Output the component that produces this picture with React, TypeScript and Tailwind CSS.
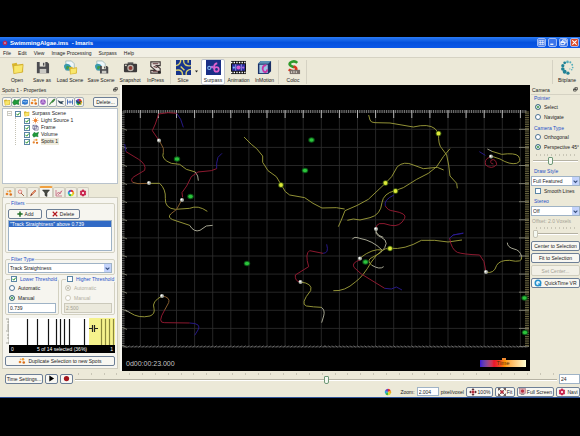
import React, { ReactNode } from "react";

/* ---------- icons ---------- */

const Svg = ({ c, children, vb = "0 0 16 16" }: { c: string; children: ReactNode; vb?: string }) => (
  <svg viewBox={vb} className={"shrink-0 " + c} aria-hidden="true">
    {children}
  </svg>
);

const Folder = () => (
  <>
    <path d="M2 4l5-1 1 2 6-1v9l-10 1.500z" fill="#d9b52c" />
    <path d="M4 6l10-1-1 8-9 1.500z" fill="#f9e76a" stroke="#c9a227" strokeWidth=".6" />
  </>
);
const Floppy = () => (
  <>
    <path d="M2 2h11l2 2v10H2z" fill="#4c4c50" />
    <rect x="5" y="2" width="6" height="5" fill="#e9e7dc" />
    <rect x="8.500" y="3" width="1.500" height="3" fill="#4c4c50" />
    <rect x="5" y="9.500" width="7" height="4.500" fill="#c9c8c2" />
  </>
);
const Page = () => (
  <>
    <path d="M3 1h6l3 3v7H3z" fill="#eef6fb" stroke="#8aa" strokeWidth=".7" />
    <path d="M1 6c2-3 5-2 7 0s2 4-1 5-6-1-6-5z" fill="#3a9ab0" />
    <path d="M4 6l3 1-2 3-2-1z" fill="#3f9e48" />
  </>
);
const Camera = () => (
  <>
    <rect x="1" y="4" width="14" height="9" rx="1" fill="#3c3a3a" />
    <rect x="5" y="2.500" width="6" height="2" fill="#555" />
    <circle cx="8" cy="8.500" r="3.400" fill="#bdb6ae" />
    <circle cx="8" cy="8.500" r="2.100" fill="#8c3b34" />
    <rect x="2" y="5" width="2" height="1.500" fill="#d8d5c8" />
  </>
);
const Press = () => (
  <>
    <path d="M3 2h10v4H9l4 3v5H3v-3h5L3 7z" fill="#e9e2dd" stroke="#3d3535" strokeWidth="1.200" />
    <path d="M5 4h6M6 7l4 1M5 12h7" stroke="#5c3035" strokeWidth="1.200" />
    <circle cx="12" cy="13" r="1.500" fill="#222" />
  </>
);
const Slice = () => (
  <>
    <rect width="16" height="16" fill="#16348c" />
    <path d="M0 6c4-1 5-3 5-6M8 0c0 5 3 7 8 6M0 11c5-1 7 1 7 5M11 16c-1-4 2-6 5-6M5 7l4 4M13 0v3" stroke="#d8cf6a" strokeWidth="1.500" fill="none" />
  </>
);
const Surpass = () => (
  <>
    <rect width="16" height="16" fill="#1a2f86" />
    <circle cx="3.500" cy="8.500" r="1.700" fill="none" stroke="#7fb6ef" strokeWidth="1.100" />
    <circle cx="6.500" cy="7.500" r="1.500" fill="#b56ad8" />
    <path d="M12 3.500c-3 .5-3.800 3-3.300 6" fill="none" stroke="#e060cc" strokeWidth="2" />
    <circle cx="11.200" cy="10" r="2.400" fill="none" stroke="#e060cc" strokeWidth="1.800" />
  </>
);
const Film = () => (
  <>
    <rect y="1" width="16" height="14" fill="#111" />
    <path d="M0 2.700h16M0 13.300h16" stroke="#fff" strokeWidth="1.500" strokeDasharray="1.500 1.300" />
    <rect x="1" y="4.500" width="14" height="7" fill="#2c2ea0" />
    <path d="M5 4.500v7M11 4.500v7" stroke="#8f91e5" />
    <circle cx="8" cy="8" r="2.200" fill="#d55cd0" />
    <circle cx="3" cy="8" r="1.200" fill="#7fb6ef" />
    <circle cx="13" cy="8" r="1.200" fill="#b06be0" />
  </>
);
const InMotion = () => (
  <>
    <path d="M1 4l3-3h11v11l-3 3H1z" fill="#1a2f66" />
    <path d="M1 4l3-3h11l-3 3z" fill="#5a8fb5" />
    <rect x="2.500" y="5" width="9" height="9" fill="#9fc4e4" />
    <path d="M10 5.500c-4 0-5 4-3 6.500 2 2 4.500 0 3.500-2" fill="none" stroke="#c637a6" strokeWidth="2" />
  </>
);
const Coloc = () => (
  <>
    <path d="M12 3C9 0 3 2 4 5c1 2 4 2 5 3" fill="none" stroke="#2f9a2c" strokeWidth="2.800" />
    <path d="M8 7c4 1 4 5 0 5-2 0-4-1-5-2" fill="none" stroke="#d9361f" strokeWidth="2.800" />
    <rect x="4" y="10.500" width="11" height="4.500" fill="#77706a" />
    <path d="M6 14v-2M8.500 14v-2.500M11 14v-2" stroke="#e8e2d8" />
  </>
);
const Bitplane = () => (
  <>
    {[[5, 3, 1.500], [3, 6, 1.700], [3, 9.500, 1.900], [5, 12.500, 2.100], [8.500, 14, 1.700], [8, 2, 1.400], [11, 2.500, 1.100], [13, 5, 1], [13.500, 8, 0.900], [12.500, 10.500, 0.800], [10.500, 9.500, 0.600]].map(([x, y, r], i) => (
      <circle key={i} cx={x} cy={y} r={r} fill={i < 5 ? "#1f8296" : "#57aebb"} />
    ))}
  </>
);
const Sun = () => (
  <>
    <path d="M8 1v14M1 8h14M3 3l10 10M13 3L3 13" stroke="#f09a4a" strokeWidth="1.600" />
    <circle cx="8" cy="8" r="3.400" fill="#ee7a2c" />
  </>
);
const Frame = () => (
  <path d="M2 3h8v8H2zM6 6h8v8H6zM2 3l4 3M10 3l4 3M2 11l4 3" fill="none" stroke="#54507e" strokeWidth="1.400" />
);
const Volume = () => <path d="M1 9l4-6 4 2 6-2-2 6 1 4-5-1-5 2z" fill="#1f9a3a" stroke="#0c6a25" />;
const Spots = () => (
  <>
    <circle cx="4" cy="10" r="2.600" fill="#e8832a" />
    <circle cx="10" cy="4.500" r="2.600" fill="#f0a03c" />
    <circle cx="11.500" cy="11" r="2.600" fill="#d9701c" />
    <circle cx="5" cy="4.500" r="1.500" fill="#e6a766" />
  </>
);
const Surface = () => (
  <>
    <path d="M2 6c4-5 8-2 12-2-1 4 1 5-1 8-4 2-9 2-11-1z" fill="#2d78cf" />
    <path d="M3 8c3-3 6 2 9-1" stroke="#bfe0ff" strokeWidth="1.500" fill="none" />
  </>
);
const Cell = () => (
  <>
    <circle cx="8" cy="8" r="5.500" fill="#9a5cc0" />
    <path d="M8 2v5l4 4M8 7L4 11" stroke="#efdcff" strokeWidth="1.300" fill="none" />
  </>
);
const Filament = () => <path d="M3 14C4 9 7 8 8 6s3-4 6-4c-1 4-3 6-6 7" fill="#3c9d3a" stroke="#23502a" />;
const Clip = () => <path d="M1 4l6 3 7-1-4 4 4 3-8-2-3-3z" fill="#2b4356" />;
const Ortho = () => <path d="M3 3v10M13 3v10M3 8h10M8 5v6" stroke="#3b62b5" strokeWidth="1.800" fill="none" />;
const Wheel = () => (
  <>
    {["#e2332d", "#f0a91e", "#d9df2e", "#35b54a", "#2aa6d8", "#6a3fc4"].map((f, i) => (
      <path key={f} d="M8 8V1.500a6.500 6.500 0 0 1 5.630 3.250z" fill={f} transform={`rotate(${i * 60} 8 8)`} />
    ))}
  </>
);
const WheelRing = () => (
  <>
    <Wheel />
    <circle cx="8" cy="8" r="2.600" fill="#fff" />
  </>
);
const Wand = () => (
  <>
    <path d="M7 7l7 7" stroke="#a06a4a" strokeWidth="2" />
    <circle cx="6" cy="5.500" r="3.500" fill="#fbe3e0" stroke="#d2544a" strokeWidth="1.300" />
  </>
);
const Pencil = () => (
  <>
    <path d="M3 14l2-5 7-7 2 2-7 7z" fill="#e99a6a" stroke="#b5412f" />
    <path d="M3 14l2-5 2 2z" fill="#6a3b2a" />
  </>
);
const Funnel = () => <path d="M1 2h14l-5 6v7l-4-2V8z" fill="#4b4d45" stroke="#222" />;
const Chart = () => <path d="M2 2v12h12M3 11l4-5 3 4 4-7M6 12l7-8" fill="none" stroke="#c25474" strokeWidth="1.400" />;
const Flower = () => (
  <>
    {[0, 60, 120, 180, 240, 300].map((a) => (
      <circle key={a} cx="8" cy="3.800" r="2.600" fill="#c9264f" transform={`rotate(${a} 8 8)`} />
    ))}
    <circle cx="8" cy="8" r="2" fill="#fbdfe6" />
  </>
);
const Cross4 = () => (
  <>
    <path d="M8 0l3 4H5zM8 16l3-4H5zM0 8l4-3v6zM16 8l-4-3v6z" fill="#542d33" />
    <circle cx="8" cy="8" r="3.500" fill="#b8303f" />
  </>
);
const FitIcon = () => (
  <>
    <path d="M1 5V1h4M11 1h4v4M15 11v4h-4M5 15H1v-4M1 1l14 14M15 1L1 15" stroke="#43302f" strokeWidth="1.500" fill="none" />
    <circle cx="8" cy="8" r="3.500" fill="#b8303f" />
  </>
);
const ScreenIcon = () => (
  <>
    <rect x="1" y="1" width="14" height="12" fill="#d8a9b2" stroke="#97606c" />
    <circle cx="8" cy="7" r="3.800" fill="#b8303f" />
    <path d="M4 15h8" stroke="#555" strokeWidth="1.500" />
  </>
);
const Restore = () => (
  <path d="M6 5V2h8v7h-3M2 6h8v7H2zM2 8h8" fill="none" stroke="currentColor" strokeWidth="2" />
);

/* ---------- controls ---------- */

const field = "border border-[#9fb3c6] bg-white";
const btn =
  "flex items-center justify-center rounded-[2px] border border-[#6d7f96] bg-[#f8f7f2] whitespace-nowrap h-[10px]";

function Check({ label, on, blue, children }: { label: string; on?: boolean; blue?: boolean; children?: ReactNode }) {
  return (
    <label className={"flex items-center gap-[3px] whitespace-nowrap " + (blue ? "text-[#2550c8]" : "")}>
      <span className="relative flex size-[6px] shrink-0">
        <input type="checkbox" defaultChecked={on} className="peer size-[6px] appearance-none border border-[#5c86a6] bg-white" />
        <svg viewBox="0 0 6 6" className="pointer-events-none absolute inset-0 hidden size-[6px] peer-checked:block">
          <path d="M1.500 2.800l1.200 1.400L4.800 1.600" fill="none" stroke="#1f9422" strokeWidth="1" />
        </svg>
      </span>
      {children}
      <span>{label}</span>
    </label>
  );
}

function Radio({ label, name, on, dim }: { label: string; name: string; on?: boolean; dim?: boolean }) {
  return (
    <label className={"flex h-[10px] items-center gap-[3px] whitespace-nowrap " + (dim ? "text-[#b3b0a2]" : "")}>
      <input
        type="radio"
        name={name}
        defaultChecked={on}
        disabled={dim}
        className="size-[6px] shrink-0 appearance-none rounded-full border border-[#4d7396] bg-white checked:bg-[#2c8f3a] checked:shadow-[inset_0_0_0_1px_#fff] disabled:border-[#cfccbd] disabled:checked:bg-[#b8b5a6]"
      />
      {label}
    </label>
  );
}

function Drop({ label, options }: { label: string; options: string[] }) {
  return (
    <span className="relative mt-px block">
      <select aria-label={label} className={"block h-[10px] w-full appearance-none pl-px " + field}>
        {options.map((o) => (
          <option key={o}>{o}</option>
        ))}
      </select>
      <span className="pointer-events-none absolute inset-y-px right-px flex w-[7px] items-center justify-center bg-[#c3d3fb]">
        <svg viewBox="0 0 8 8" className="size-[5px]">
          <path d="M1 2.500l3 3 3-3" fill="none" stroke="#37507f" strokeWidth="1.700" />
        </svg>
      </span>
    </span>
  );
}

const rangeCls =
  "block h-[9px] w-full appearance-none bg-transparent [&::-webkit-slider-runnable-track]:h-[2px] [&::-webkit-slider-runnable-track]:border-t [&::-webkit-slider-runnable-track]:border-[#b5b2a3] [&::-webkit-slider-runnable-track]:bg-white [&::-webkit-slider-thumb]:-mt-[4px] [&::-webkit-slider-thumb]:h-[8px] [&::-webkit-slider-thumb]:w-[5px] [&::-webkit-slider-thumb]:appearance-none [&::-webkit-slider-thumb]:rounded-t-[1px] [&::-webkit-slider-thumb]:rounded-b-[2px] [&::-webkit-slider-thumb]:border [&::-webkit-slider-thumb]:border-[#6f9878] [&::-webkit-slider-thumb]:bg-[#f4f8f0] disabled:[&::-webkit-slider-thumb]:border-[#c6c3b4]";

const Ticks = ({ n }: { n: number }) => (
  <div className="flex h-[2px] justify-between px-[3px]">
    {Array.from({ length: n }, (_, i) => (
      <span key={i} className="w-px bg-[#c9c6b6]" />
    ))}
  </div>
);

function Group({ title, className, children }: { title: ReactNode; className: string; children: ReactNode }) {
  return (
    <fieldset className={"min-w-0 rounded-[2px] border border-[#d3d1c1] " + className}>
      <legend className="ml-[2px] px-px leading-[6px] text-[#2550c8]">{title}</legend>
      {children}
    </fieldset>
  );
}

/* ---------- top bars ---------- */

function Tool({ label, w, on, children }: { label: string; w: string; on?: boolean; children: ReactNode }) {
  return (
    <button
      className={
        "flex h-[26px] shrink-0 flex-col items-center justify-end gap-[2px] rounded-[2px] border pb-px leading-[6px] whitespace-nowrap " +
        w +
        (on ? " border-[#c0c4cc] bg-white" : " border-transparent")
      }
    >
      <Svg c="size-[15px]">{children}</Svg>
      {label}
    </button>
  );
}

const Sep = ({ className = "" }: { className?: string }) => <span className={"h-[24px] w-px bg-[#d5d2c3] " + className} />;

function WinButton({ label, red, children }: { label: string; red?: boolean; children: ReactNode }) {
  return (
    <button
      aria-label={label}
      className={"flex size-[9px] items-center justify-center rounded-[2px] border border-[#9db9f5] text-white " + (red ? "bg-[#dc4a2a]" : "bg-[#3b74ea]")}
    >
      <Svg c="size-[7px]">{children}</Svg>
    </button>
  );
}

function TopBars() {
  return (
    <header>
      <div className="flex h-[11px] items-center bg-linear-to-b from-[#2a7bf5] via-[#0551dd] to-[#0b57e8] pr-px pl-[2px] text-[6px] leading-[8px] font-bold text-white">
        <Svg c="size-[6px]"><Flower /></Svg>
        <h1 className="ml-[2px] flex-1 whitespace-pre">SwimmingAlgae.ims  - Imaris</h1>
        <div className="flex gap-[2px]">
          <WinButton label="Layout"><path d="M2 3h12v10H2zM6 3v10M10 3v10M2 8h12" fill="none" stroke="#fff" strokeWidth="1.400" /></WinButton>
          <WinButton label="Minimize"><path d="M3 12h7" stroke="#fff" strokeWidth="3" /></WinButton>
          <WinButton label="Restore"><Restore /></WinButton>
          <WinButton label="Close" red><path d="M3 3l10 10M13 3L3 13" stroke="#fff" strokeWidth="2.500" /></WinButton>
        </div>
      </div>
      <nav className="flex h-[10px] items-center gap-[7px] border-b border-[#d5d2c3] bg-[#f1efe4] pl-[3px]">
        {["File", "Edit", "View", "Image Processing", "Surpass", "Help"].map((m) => (
          <button key={m}>{m}</button>
        ))}
      </nav>
      <div className="flex h-[27px] items-center pl-[4px]">
        <Tool label="Open" w="w-[26px]"><Folder /></Tool>
        <Tool label="Save as" w="w-[24px]"><Floppy /></Tool>
        <Tool label="Load Scene" w="w-[32px]">
          <Page />
          <g transform="translate(5 5) scale(.7)"><Folder /></g>
        </Tool>
        <Tool label="Save Scene" w="w-[30px]">
          <Page />
          <g transform="translate(5 5) scale(.68)"><Floppy /></g>
        </Tool>
        <Tool label="Snapshot" w="w-[28px]"><Camera /></Tool>
        <Tool label="InPress" w="w-[23px]"><Press /></Tool>
        <Sep className="mx-[3px]" />
        <Tool label="Slice" w="w-[18px]"><Slice /></Tool>
        <button aria-label="Slice options" className="flex w-[9px] justify-center">
          <Svg c="size-[3px]"><path d="M0 3h16l-8 10z" fill="#222" /></Svg>
        </button>
        <Tool label="Surpass" w="w-[24px]" on><Surpass /></Tool>
        <Tool label="Animation" w="w-[27px]"><Film /></Tool>
        <Tool label="InMotion" w="w-[25px]"><InMotion /></Tool>
        <Sep className="mr-[4px] ml-px" />
        <Tool label="Coloc" w="w-[20px]"><Coloc /></Tool>
        <Sep className="ml-[3px]" />
        <Sep className="mr-px ml-auto" />
        <Tool label="Bitplane" w="w-[26px]"><Bitplane /></Tool>
      </div>
    </header>
  );
}

/* ---------- left panel ---------- */

function PanelTitle({ children }: { children: ReactNode }) {
  return (
    <div className="flex h-[10px] items-center justify-between border-b border-[#d5d2c3] pr-[2px] pl-px">
      <h2 className="whitespace-nowrap">{children}</h2>
      <button aria-label="Float panel"><Svg c="size-[5px]"><Restore /></Svg></button>
    </div>
  );
}

const objectTools: [string, ReactNode][] = [
  ["Group", <Folder />],
  ["Volume", <Volume />],
  ["Surface", <Surface />],
  ["Spots", <Spots />],
  ["Cells", <Cell />],
  ["Filament", <Filament />],
  ["Clipping plane", <Clip />],
  ["Ortho slicer", <Ortho />],
  ["Measurement", <><Wheel /><Clip /></>],
];

const sceneItems: [string, ReactNode][] = [
  ["Light Source 1", <Sun />],
  ["Frame", <Frame />],
  ["Volume", <Volume />],
  ["Spots 1", <Spots />],
];

const tabs: [string, ReactNode][] = [
  ["Creation", <Spots />],
  ["Settings", <Wand />],
  ["Edit", <Pencil />],
  ["Filters", <Funnel />],
  ["Statistics", <Chart />],
  ["Color", <WheelRing />],
  ["Tools", <Flower />],
];

const bars = [18, 28, 39, 47, 51, 55, 60, 75, 92, 96, 100, 104];

function Histogram() {
  return (
    <div className="mt-[3px] flex h-[35px]">
      <svg viewBox="0 0 4 35" className="h-full w-[4px]">
        <path d="M4 1v25M1 1h3M2 4h2M2 7h2M2 9h2M2 11h2M1 13h3M2 17h2M2 20h2M1 25h3" stroke="#77766c" strokeWidth=".6" />
      </svg>
      <div className="flex flex-1 flex-col">
        <svg viewBox="0 0 106 27" preserveAspectRatio="none" className="block min-h-0 w-full flex-1 bg-white">
          <rect x="80" width="26" height="27" fill="#f5f28c" />
          {bars.map((x) => (
            <path key={x} d={`M${x + 0.5} 1v26`} stroke={x > 80 ? "#8a873c" : "#151515"} strokeWidth="1.200" />
          ))}
          <path d="M80 10.500h3M86 10.500h3M83.500 7v7M85.500 7v7" stroke="#222" strokeWidth="1.200" />
        </svg>
        <div className="flex h-[8px] items-center justify-between bg-black px-[2px] text-white">
          <span>0</span>
          <span>5 of 14 selected (36%)</span>
          <span>1</span>
        </div>
      </div>
    </div>
  );
}

function Threshold({ title, name, value, on }: { title: string; name: string; value: string; on?: boolean }) {
  return (
    <Group title={<Check label={title} on={on} blue />} className="flex-1 px-[2px] pt-px pb-px">
      <div className="pl-px">
        <Radio name={name} label="Automatic" on={!on} dim={!on} />
        <Radio name={name} label="Manual" on={on} dim={!on} />
      </div>
      <input
        aria-label={title + " value"}
        defaultValue={value}
        disabled={!on}
        className="block h-[10px] w-full border border-[#9fb3c6] bg-white px-px disabled:border-[#cbc9bb] disabled:bg-[#ebe9dc] disabled:text-[#a5a294]"
      />
    </Group>
  );
}

function Properties() {
  return (
    <aside className="flex w-[122px] shrink-0 flex-col border-r-2 border-[#f7f6f0] pb-[2px] pl-px">
      <PanelTitle>Spots 1 - Properties</PanelTitle>
      <div className="mt-[2px] flex items-center justify-between pr-[2px] pl-px">
        <div className="flex">
          {objectTools.map(([name, icon]) => (
            <button key={name} aria-label={name} className="flex h-[10px] w-[10px] items-center justify-center rounded-[2px] border border-[#a3adb5] bg-[#f8f7f2] not-first:-ml-px">
              <Svg c="size-[8px]">{icon}</Svg>
            </button>
          ))}
        </div>
        <button className={btn + " w-[25px]"}>Delete...</button>
      </div>
      <div className="mt-px mr-[2px] ml-px h-[76px] border border-[#b9c3cc] bg-white pt-px pl-[4px] leading-[7px]">
        <div className="flex items-center gap-[3px]">
          <Svg c="size-[5px]"><path d="M1 1h14v14H1zM4 8h8" fill="none" stroke="#9d9b8c" strokeWidth="2" /></Svg>
          <Check label="Surpass Scene" on><Svg c="-mx-px size-[7px]"><Folder /></Svg></Check>
        </div>
        <ul className="ml-[8px] border-l border-dotted border-[#c4c2b5] pl-[8px]">
          {sceneItems.map(([name, icon]) => (
            <li key={name} className="flex h-[7px] items-center">
              <span className={name === "Spots 1" ? "bg-linear-to-r from-white from-50% to-[#efecdd] to-50% pr-px" : ""}>
                <Check label={name} on><Svg c="-mx-px size-[7px]">{icon}</Svg></Check>
              </span>
            </li>
          ))}
        </ul>
      </div>
      <div role="tablist" className="mt-[2px] flex items-end pl-[2px]">
        {tabs.map(([name, icon]) => (
          <button
            key={name}
            role="tab"
            aria-label={name}
            aria-selected={name === "Filters"}
            className={
              "flex items-center justify-center rounded-t-[2px] border border-b-0 border-[#cfcdbf] " +
              (name === "Filters" ? "h-[11px] w-[14px] border-t-2 border-t-[#f0a040] bg-[#f6f5ef]" : "h-[10px] w-[12px] bg-[#efede2]")
            }
          >
            <Svg c="size-[8px]">{icon}</Svg>
          </button>
        ))}
      </div>
      <div className="mr-[2px] ml-px border border-[#cfcdbf] bg-[#f6f5ef] px-[2px] pt-[2px] pb-[2px]">
        <Group title="Filters" className="px-[2px] pb-px">
          <div className="mt-[3px] flex gap-[4px]">
            <button className={btn + " w-[34px] gap-[2px]"}>
              <Svg c="size-[6px]"><path d="M8 1v14M1 8h14" stroke="#1e6b25" strokeWidth="4" /></Svg>Add
            </button>
            <button className={btn + " w-[34px] gap-[2px]"}>
              <Svg c="size-[6px]"><path d="M2 2l12 12M14 2L2 14" stroke="#b3161c" strokeWidth="3" /></Svg>Delete
            </button>
          </div>
          <ul className={"mt-px h-[31px] " + field}>
            <li className="bg-[#316ac5] pl-px leading-[6px] text-white">&quot;Track Straightness&quot; above 0.739</li>
          </ul>
        </Group>
        <Group title="Filter Type" className="mt-[3px] px-[2px] pb-px">
          <Drop label="Filter Type" options={["Track Straightness", "Track Length", "Track Duration"]} />
        </Group>
        <div className="mt-px flex gap-[2px]">
          <Threshold title="Lower Threshold" name="lower" value="0.739" on />
          <Threshold title="Higher Threshold" name="higher" value="2.500" />
        </div>
        <Histogram />
        <button className={btn + " mt-[3px] w-full gap-[2px]"}>
          <Svg c="size-[8px]"><Spots /></Svg>Duplicate Selection to new Spots
        </button>
      </div>
    </aside>
  );
}

/* ---------- 3D view ---------- */

/* Track pieces are [colour, path]; each set is plotted at three units per view pixel. */
const Y = "#9c9c3a";
const R = "#971b33";
const B = "#2a1b90";
const W = "#b0b09c";
const O = "#8f6332";

const upperLeft = [
  [B, "M196 82L188 58 176 40"],
  [R, "M176 40L150 38 122 42 112 72 103 92 122 120"],
  [O, "M124 122L136 145 136 158"],
  [Y, "M136 158Q128 178 160 190L185 193 205 208 232 216"],
  [W, "M232 216L239 228 241 242"],
  [B, "M20 132L24 155"],
  [R, "M24 155L62 178Q86 194 80 211L48 230Q36 238 44 247"],
  [O, "M44 247L60 251 92 250"],
  [Y, "M92 250L125 250Q144 268 142 295Q140 325 172 328L215 325Q240 314 268 334"],
  [B, "M312 160L300 172Q294 190 296 206"],
  [R, "M296 206L280 212 240 216 220 230 206 258 192 278 194 292"],
  [O, "M190 302L176 328 158 342"],
  [Y, "M158 342Q148 352 164 359L215 376"],
  [W, "M215 376Q228 398 246 391L265 378 284 376"],
  [Y, "M378 111L400 133 416 146 434 168 434 187 450 212 475 230 490 255 502 275 515 285 560 293 585 310 612 324 655 323 680 327"],
];
const upperRight = [
  [Y, "M146 45L150 60Q152 68 165 68L210 69 280 81Q325 70 345 86L356 100Q354 135 366 146L380 165 386 195 390 228 410 250 412 265"],
  [Y, "M390 146L370 170 350 200 325 220 290 238 250 263 225 272Q190 280 186 308Q182 345 150 353L120 360 100 357 82 361"],
  [Y, "M371 210L352 202 310 206 280 195Q252 182 232 200L215 230 196 250 145 298 112 316 75 332 64 360 55 380"],
  [B, "M222 285Q190 300 196 318"],
  [R, "M196 318Q204 332 220 333Q262 340 254 355Q240 382 212 376Q166 360 168 388"],
  [W, "M168 388Q166 404 190 412"],
  [B, "M478 155L496 166"],
  [R, "M508 172Q492 178 497 195Q515 210 530 194Q528 175 514 180Q508 190 520 192"],
  [Y, "M516 154L545 163Q585 158 595 168Q606 184 590 190Q570 195 540 177L516 169"],
  [W, "M502 147L516 154"],
  [B, "M430 399L400 405 388 415"],
];
const lower = [
  [W, "M774 5Q772 14 790 22Q820 36 788 68"],
  [Y, "M788 68L756 86Q748 96 762 106"],
  [W, "M762 106Q785 120 797 110"],
  [W, "M703 28Q708 18 725 25Q765 32 792 60"],
  [Y, "M792 60Q765 54 726 84"],
  [Y, "M1032 30L990 36 950 31 910 31Q860 60 816 55Q790 52 760 96Q735 140 712 156Q680 185 646 182"],
  [R, "M726 90Q700 98 708 112L730 132 800 175"],
  [B, "M800 175L820 177 835 171 852 180"],
  [B, "M1036 10L1005 15 995 25"],
  [R, "M995 25Q1000 58 1018 67Q1035 73 1085 75L1098 95 1104 126"],
  [Y, "M1104 126Q1128 133 1136 106Q1145 90 1175 91Q1215 100 1211 80"],
  [W, "M1211 80Q1206 60 1188 57Q1168 52 1168 38"],
  [B, "M626 43Q634 70 615 70"],
  [R, "M615 70L575 62Q560 70 572 110L532 135Q530 154 547 156"],
  [Y, "M547 156Q585 160 578 182Q545 222 565 228Q585 231 610 232"],
  [W, "M610 232Q622 240 617 258L611 278"],
  [W, "M22 240L36 248"],
  [Y, "M36 248Q62 266 96 258Q112 252 108 235Q100 215 132 198"],
  [O, "M132 198Q158 202 152 218L140 240"],
  [R, "M140 240Q116 280 140 278L215 279"],
  [B, "M215 279Q252 280 240 300L230 316"],
];
const plots: [string, string[][]][] = [
  ["translate(118 100) scale(.33333)", upperLeft],
  ["translate(320 100) scale(.33333)", upperRight],
  ["translate(118 230) scale(.33333)", lower],
];

const greenSpots = [[177, 159], [190.500, 196.500], [311.500, 140], [305, 170.500], [247, 263.500], [365.500, 262], [524.500, 298], [525, 332.500]];
const whiteSpots = [[159, 140.500], [149, 183], [182, 200], [376, 229], [491, 156.500], [162, 296], [300.500, 282], [360, 258.500], [486, 272]];
const yellowSpots = [[281, 185], [438.500, 133.500], [385.500, 183], [395.500, 191], [390, 248.500]];

const cols = Array.from({ length: 22 }, (_, i) => 140.3 + i * 18.1);
const rows = Array.from({ length: 13 }, (_, i) => 129.3 + i * 18.1);
const topTicks = Array.from({ length: 223 }, (_, i) => 124 + i * 1.81);
const sideTicks = Array.from({ length: 130 }, (_, i) => 112 + i * 1.81);

function Viewport() {
  return (
    <main className="relative min-w-0 flex-1 overflow-hidden bg-black">
      <svg viewBox="122 85 408 286" preserveAspectRatio="xMidYMid slice" className="absolute inset-0 size-full" role="img" aria-label="Tracked algae">
        <path
          d={cols.map((x) => `M${x} 111V347`).join("") + rows.map((y) => `M122 ${y}H526`).join("")}
          stroke="#303030"
          strokeWidth=".8"
        />
        <path d={topTicks.map((x) => `M${x} 110v3`).join("")} stroke="#a8a8a8" strokeWidth=".7" />
        <path d={cols.map((x) => `M${x} 110v8`).join("")} stroke="#c0c0c0" strokeWidth=".9" />
        <path d={sideTicks.map((y) => `M122 ${y}h2.500`).join("")} stroke="#8c8c8c" strokeWidth=".7" />
        <path d={rows.map((y) => `M122 ${y - 1}l5 2M519 ${y}h10`).join("")} stroke="#909080" strokeWidth=".8" />
        <path d={sideTicks.map((y) => `M525 ${y}h4`).join("")} stroke="#98905c" strokeWidth=".7" />
        <path d="M122 347H528" stroke="#444" strokeWidth=".7" />
        <path d={topTicks.filter((_, i) => i % 2 === 0).map((x) => `M${x} 347.500l${x < 325 ? 2 : -2} -2`).join("")} stroke="#8a8a8a" strokeWidth=".7" />
        {plots.map(([t, set]) => (
          <g key={t} transform={t} fill="none" strokeWidth="2.800" strokeLinejoin="round">
            {set.map(([c, d]) => (
              <path key={d} d={d} stroke={c} />
            ))}
          </g>
        ))}
        {greenSpots.map(([x, y]) => (
          <g key={x}>
            <ellipse cx={x} cy={y} rx="3.200" ry="2.700" fill="#0c5a18" />
            <ellipse cx={x} cy={y} rx="2.200" ry="1.800" fill="#2cc43c" />
          </g>
        ))}
        {yellowSpots.map(([x, y]) => (
          <g key={x}>
            <circle cx={x} cy={y} r="2.800" fill="#4a6a10" />
            <circle cx={x} cy={y} r="1.900" fill="#dfe83a" />
          </g>
        ))}
        {whiteSpots.map(([x, y]) => (
          <g key={x}>
            <circle cx={x} cy={y} r="2" fill="#a9ada4" />
            <circle cx={x - 0.5} cy={y - 0.5} r=".9" fill="#fff" />
          </g>
        ))}
      </svg>
      <p className="absolute bottom-[2px] left-[4px] text-[7px] leading-[10px] text-[#c4c4c4]">0d00:00:23.000</p>
      <div className="absolute right-[4px] bottom-[4px] h-[7px] w-[46px] bg-linear-to-r from-[#e8142c] via-[#ff9a00] via-55% to-[#ffffd0] text-center text-[6px] leading-[7px] text-[#5a2a00]">
        <span className="absolute inset-0 bg-linear-to-r from-[#3a12d8] via-[#e8142c] via-30% to-transparent to-55%" />
        <span className="absolute -top-[2px] left-[22px] h-[2px] w-[4px] bg-[#f08a30]" />
        <span className="relative">Time</span>
      </div>
    </main>
  );
}

/* ---------- right panel ---------- */

const Heading = ({ children }: { children: ReactNode }) => <h3 className="pl-[3px] leading-[7px] text-[#2550c8]">{children}</h3>;

function CameraPanel() {
  return (
    <aside className="w-[50px] shrink-0 pl-px">
      <PanelTitle>Camera</PanelTitle>
      <Heading>Pointer</Heading>
      <div className="mb-[3px] pl-[4px]">
        <Radio name="pointer" label="Select" on />
        <Radio name="pointer" label="Navigate" />
      </div>
      <Heading>Camera Type</Heading>
      <div className="mb-[2px] pl-[4px]">
        <Radio name="camera" label="Orthogonal" />
        <Radio name="camera" label="Perspective 45°" on />
      </div>
      <div className="mb-[3px] px-[2px]">
        <Ticks n={11} />
        <input type="range" aria-label="Perspective angle" defaultValue={38} className={rangeCls} />
      </div>
      <Heading>Draw Style</Heading>
      <Drop label="Draw Style" options={["Full Featured", "Wireframe"]} />
      <div className="mb-[2px] flex h-[10px] items-center pl-[4px]"><Check label="Smooth Lines" /></div>
      <Heading>Stereo</Heading>
      <Drop label="Stereo" options={["Off", "Red-Cyan"]} />
      <p className="pl-px leading-[10px] whitespace-nowrap text-[#a5a294]">Offset: 2.0 Voxels</p>
      <div className="mt-px px-[2px]">
        <Ticks n={11} />
        <input type="range" aria-label="Offset" disabled defaultValue={0} className={rangeCls} />
      </div>
      <div className="mt-[3px] flex flex-col gap-[2px]">
        <button className={btn + " w-full"}>Center to Selection</button>
        <button className={btn + " w-full"}>Fit to Selection</button>
        <button disabled className="h-[11px] rounded-[2px] border border-[#d0cebf] bg-[#f2f0e6] text-[#a5a294]">Set Center...</button>
        <button className={btn + " w-full gap-[2px]"}>
          <Svg c="size-[8px]"><circle cx="8" cy="8" r="5.500" fill="#dff2fc" stroke="#2490cc" strokeWidth="3" /><path d="M9 9l5 5" stroke="#2490cc" strokeWidth="3" /></Svg>
          QuickTime VR
        </button>
      </div>
    </aside>
  );
}

/* ---------- bottom bars ---------- */

function BottomBars() {
  return (
    <footer>
      <div className="flex h-[15px] items-center gap-[2px] pl-[5px]">
        <button className={btn + " w-[38px]"}>Time Settings...</button>
        <button aria-label="Play" className={btn + " w-[13px]"}><Svg c="size-[7px]"><path d="M3 1l11 7-11 7z" fill="#000" /></Svg></button>
        <button aria-label="Record" className={btn + " w-[13px]"}><Svg c="size-[7px]"><circle cx="8" cy="8" r="6" fill="#a3141c" /></Svg></button>
        <div className="flex-1">
          <Ticks n={38} />
          <input type="range" aria-label="Time point" min={0} max={44} defaultValue={23} className={rangeCls} />
        </div>
        <input aria-label="Frame" defaultValue="24" className={"h-[10px] w-[21px] px-px " + field} />
      </div>
      <div className="flex h-[12px] items-center justify-end gap-[2px] border-b border-[#31559c] whitespace-nowrap">
        <Svg c="mr-[6px] size-[8px]"><Wheel /></Svg>
        <label htmlFor="zoom">Zoom:</label>
        <input id="zoom" defaultValue="2.004" className={"h-[9px] w-[22px] px-px " + field} />
        <span>pixel/voxel</span>
        <button className={btn + " w-[27px] gap-px"}><Svg c="size-[8px]"><Cross4 /></Svg>100%</button>
        <button className={btn + " w-[20px] gap-px"}><Svg c="size-[8px]"><FitIcon /></Svg>Fit</button>
        <button className={btn + " w-[37px] gap-px"}><Svg c="size-[7px]"><ScreenIcon /></Svg>Full Screen</button>
        <button className={btn + " w-[24px] gap-px"}><Svg c="size-[8px]"><Flower /></Svg>Navi</button>
      </div>
    </footer>
  );
}

export default function App() {
  return (
    <div className="min-h-screen bg-black pt-[37px]">
      <div className="bg-[#ece9d8] font-['Liberation_Sans',Arial,sans-serif] text-[5px] leading-[6px] text-[#1c1c1c]">
        <TopBars />
        <div className="flex">
          <Properties />
          <Viewport />
          <CameraPanel />
        </div>
        <BottomBars />
      </div>
    </div>
  );
}
